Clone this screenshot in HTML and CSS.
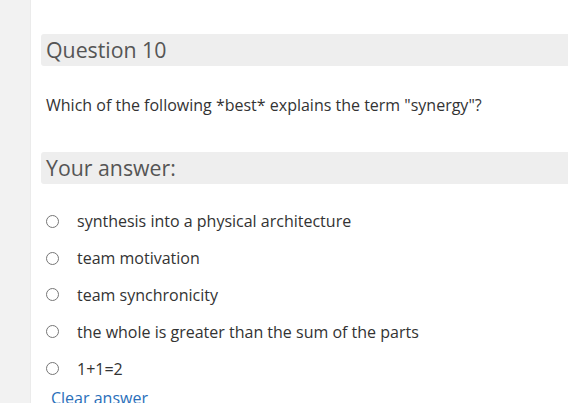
FILE: index.html
```html
<!DOCTYPE html>
<html>
<head>
<meta charset="utf-8">
<link rel="stylesheet" href="styles.css">
</head>
<body>
<div class="page">
  <div class="side"></div>
  <main class="content">
    <div class="heading">Question 10</div>
    <p class="question">Which of the following *best* explains the term "synergy"?</p>
    <div class="heading answer-head">Your answer:</div>
    <ul class="options">
      <li class="option"><span class="radio"></span><span>synthesis into a physical architecture</span></li>
      <li class="option"><span class="radio"></span><span>team motivation</span></li>
      <li class="option"><span class="radio"></span><span>team synchronicity</span></li>
      <li class="option"><span class="radio"></span><span>the whole is greater than the sum of the parts</span></li>
      <li class="option"><span class="radio"></span><span>1+1=2</span></li>
    </ul>
    <a class="clear" href="#">Clear answer</a>
  </main>
</div>
</body>
</html>
```
FILE: styles.css
```css
html, body {
  margin: 0;
  padding: 0;
  background: #fff;
  font-family: "Open Sans", "Liberation Sans", sans-serif;
  color: #333;
}
.page {
  display: flex;
  height: 403px;
  overflow: hidden;
}
.side {
  width: 30px;
  flex: none;
  background: #f2f2f2;
  border-right: 1px solid #ebebeb;
}
.content {
  flex: 1;
  padding-left: 10px;
  padding-top: 34px;
}
.heading {
  height: 32px;
  background: #eeeeee;
  border-radius: 3px 0 0 3px;
  padding-left: 5px;
  font-size: 21.3px;
  line-height: 32px;
  color: #555;
}
.question {
  margin: 29px 0 0 5px;
  font-size: 16px;
  line-height: 20px;
  color: #333;
}
.answer-head {
  margin-top: 37px;
}
.options {
  list-style: none;
  margin: 19px 0 0 0;
  padding: 0;
}
.option {
  display: flex;
  align-items: center;
  height: 36.8px;
  font-size: 16px;
  color: #333;
}
.radio {
  width: 11px;
  height: 11px;
  border: 1px solid #767676;
  border-radius: 50%;
  margin-left: 5px;
  margin-right: 18px;
  flex: none;
}
.clear {
  display: block;
  margin: 1px 0 0 10px;
  font-size: 16px;
  line-height: 20px;
  color: #2a6fba;
  text-decoration: none;
}
```
